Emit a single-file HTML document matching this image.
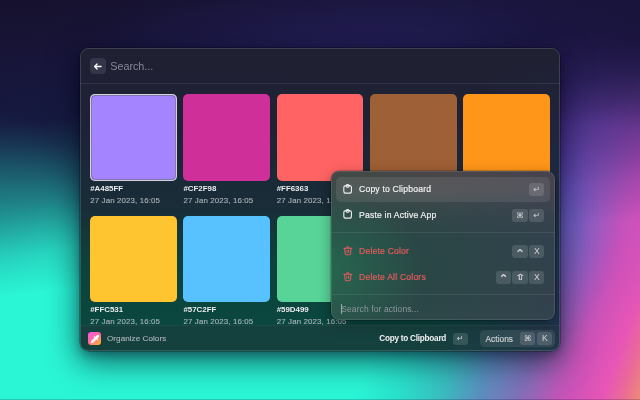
<!DOCTYPE html>
<html lang="en">
<head>
<meta charset="utf-8">
<title>Organize Colors</title>
<style>
*{box-sizing:border-box;margin:0;padding:0}
html,body{width:640px;height:400px;overflow:hidden;background:#15132f}
body{position:relative;font-family:"Liberation Sans",sans-serif}
.bg{position:absolute;left:0;top:0;width:640px;height:400px;overflow:hidden;
 background:
  radial-gradient(ellipse 85px 85px at -10px 195px, rgba(30,150,150,.30), rgba(30,150,150,0) 100%),
  radial-gradient(ellipse 200px 90px at 640px 40px, rgba(28,16,60,.6), rgba(28,16,60,0) 100%),
  radial-gradient(ellipse 170px 95px at 615px 125px, rgba(120,55,185,.40), rgba(120,55,185,0) 100%),
  radial-gradient(ellipse 300px 90px at 370px 62px, rgba(38,31,92,.85), rgba(38,31,92,0) 100%),
  linear-gradient(173deg,#16112d 0px,#17153a 70px,#161a40 125px,rgba(22,26,64,.9) 150px,rgba(22,26,64,.72) 180px,rgba(22,26,64,.54) 205px,rgba(22,26,64,.33) 230px,rgba(22,26,64,.15) 255px,rgba(22,26,64,0) 295px),
  radial-gradient(ellipse 95px 170px at 665px 165px, rgba(204,80,190,.92), rgba(204,80,190,0) 100%),
  radial-gradient(ellipse 85px 240px at 555px 110px, rgba(112,68,210,.95), rgba(112,68,210,0) 100%),
  linear-gradient(110deg,#2af5d5 0px,#2af5d5 470px,#2ae0cc 510px,#38c0c0 548px,#5a90c0 585px,#8070b8 623px,#c055b8 660px,#d052b8 675px,#e856b6 702px,#ea6a98 720px,#ef8a78 738px);}
.bgline{position:absolute;left:0;top:399px;width:640px;height:1px;background:rgba(0,0,40,.18)}
.win{will-change:transform;position:absolute;left:80px;top:48px;width:480px;height:303px;border-radius:8.5px;overflow:hidden;
 background:radial-gradient(ellipse 150px 230px at 100% 78%,rgba(40,44,86,.85),rgba(40,44,86,.32) 45%,rgba(40,44,86,0) 100%),linear-gradient(180deg,#1f2032 0%,#1f2134 17%,#1e2236 27%,#1c2537 35%,#1a2a38 43%,#192d38 53.5%,#14363a 60%,#0f3f3c 68%,#0c443d 76.5%,#0a473e 90%,#0a473e 100%);
 box-shadow:0 0 0 .5px rgba(0,0,0,.5),0 9px 30px 2px rgba(0,0,25,.6),0 4px 10px rgba(0,0,25,.25)}
.ring{position:absolute;left:80px;top:48px;width:480px;height:303px;border-radius:8.5px;border:1px solid rgba(255,255,255,.14);pointer-events:none}
.top{position:absolute;left:0;top:0;width:100%;height:36px;border-bottom:1px solid rgba(255,255,255,.08)}
.back{position:absolute;left:10px;top:10.25px;width:15.5px;height:15.5px;border-radius:4px;background:#34354b}
.back svg{position:absolute;left:3.25px;top:3.25px}
.ph{position:absolute;left:30.25px;top:10.6px;font-size:10.75px;line-height:15px;color:#868796}
.tile{position:absolute;width:86.75px;height:86.5px;border-radius:5px}
.sel{box-shadow:inset 0 0 0 1.3px #d2d2d8,inset 0 0 0 2px rgba(50,45,90,.55)}
.t{position:absolute;font-size:7.9px;line-height:10px;font-weight:bold;color:#ecedf0;white-space:nowrap;margin-top:.6px;margin-left:-.3px}
.s{position:absolute;font-size:7.9px;line-height:10px;color:#adb2ba;-webkit-text-stroke:.12px;white-space:nowrap;letter-spacing:.13px;margin-left:-.3px}
.foot{position:absolute;left:0;top:277.25px;width:100%;height:25.75px;background:rgba(45,50,60,.30);box-shadow:inset 0 1px 0 rgba(255,255,255,.05)}

.panel{position:absolute;left:251px;top:123px;width:224px;height:149px;border-radius:8px;overflow:hidden;
 background:radial-gradient(ellipse 95px 75px at 0px 100px,rgba(40,125,88,.55),rgba(40,125,88,0) 100%),linear-gradient(90deg,rgba(20,85,62,.18) 0%,rgba(40,60,70,.05) 45%,rgba(64,56,88,.34) 100%),
 linear-gradient(180deg,#4b4748 0%,#464a4b 14%,#36484a 26%,#2b4646 45%,#2a4645 70%,#2e4849 100%);
 box-shadow:0 0 0 .5px rgba(0,0,0,.35),0 4px 14px rgba(0,0,0,.35)}
.panel:after{content:"";position:absolute;inset:0;border-radius:8px;border:1px solid rgba(255,255,255,.10)}
.rowsel{position:absolute;left:5px;top:5.5px;width:213.5px;height:25px;border-radius:5px;background:rgba(255,255,255,.085)}
.pi{position:absolute;left:12px;width:9.6px;height:9.6px}
.pt{position:absolute;left:28px;font-size:8.6px;line-height:12px;color:#efeff1;white-space:nowrap;letter-spacing:.2px;-webkit-text-stroke:.2px}
.red{color:#e85a5c}
.sep{position:absolute;left:0;width:100%;height:1px;background:rgba(255,255,255,.08)}
.k{position:absolute;width:15.3px;height:13px;border-radius:3.2px;background:rgba(255,255,255,.13);color:#d4d6da;font-size:8px;line-height:13px;text-align:center;font-family:"DejaVu Sans","Liberation Sans",sans-serif}
.k.l{font-family:"Liberation Sans",sans-serif;font-size:8.6px}
.gc{position:relative;font-size:12px;top:2.6px;-webkit-text-stroke:.25px}
.gs{position:relative;display:inline-block;font-size:8.2px;top:0px;transform:scale(1.5,1);-webkit-text-stroke:.2px}
.psearch{position:absolute;left:10.25px;top:131.5px;font-size:8.5px;line-height:12px;color:#8b989c;white-space:nowrap;letter-spacing:.1px}
.caret{position:absolute;left:9.75px;top:132.5px;width:1px;height:10px;background:rgba(225,230,232,.6)}
.ficon{position:absolute;left:7.75px;top:6.5px;width:13px;height:13px;border-radius:3.2px;background:linear-gradient(145deg,#fa5ce6 8%,#ff6a9a 48%,#ffb02e 92%)}
.ft{position:absolute;left:27px;top:7.6px;font-size:8.1px;line-height:12px;color:#adb5b9;white-space:nowrap;letter-spacing:.05px;-webkit-text-stroke:.12px}
.fa{position:absolute;left:299.25px;top:7.9px;font-size:8.2px;line-height:12px;font-weight:bold;color:#f1f2f3;white-space:nowrap;letter-spacing:-.24px}
.abtn{position:absolute;left:399.75px;top:4.5px;width:75.25px;height:17.5px;border-radius:4.5px;background:rgba(255,255,255,.09)}
.at{position:absolute;left:405.5px;top:7.6px;font-size:8.3px;line-height:12px;color:#d0d4d8;white-space:nowrap;letter-spacing:.05px;-webkit-text-stroke:.15px}
</style>
</head>
<body>
<div class="bg"></div>
<div class="bgline"></div>
<div class="win">
 <div class="top">
  <div class="back"><svg width="9" height="9" viewBox="0 0 9 9"><path d="M8.100 4.500H1.900M4.100 2L1.600 4.500L4.100 7" fill="none" stroke="#fff" stroke-width="1.3" stroke-linecap="round" stroke-linejoin="round"/></svg></div>
  <div class="ph">Search...</div>
 </div>
 <div class="tile sel" style="left:10.0px;top:46.25px;background:#A485FF"></div>
 <div class="t" style="left:10.5px;top:135.45px">#A485FF</div>
 <div class="s" style="left:10.5px;top:147.95px">27 Jan 2023, 16:05</div>
 <div class="tile" style="left:103.25px;top:46.25px;background:#CF2F98"></div>
 <div class="t" style="left:103.75px;top:135.45px">#CF2F98</div>
 <div class="s" style="left:103.75px;top:147.95px">27 Jan 2023, 16:05</div>
 <div class="tile" style="left:196.5px;top:46.25px;background:#FF6363"></div>
 <div class="t" style="left:197.0px;top:135.45px">#FF6363</div>
 <div class="s" style="left:197.0px;top:147.95px">27 Jan 2023, 16:05</div>
 <div class="tile" style="left:289.75px;top:46.25px;background:#9E6036"></div>
 <div class="t" style="left:290.25px;top:135.45px">#9E6036</div>
 <div class="s" style="left:290.25px;top:147.95px">27 Jan 2023, 16:05</div>
 <div class="tile" style="left:383.0px;top:46.25px;background:#FF9619"></div>
 <div class="t" style="left:383.5px;top:135.45px">#FF9619</div>
 <div class="s" style="left:383.5px;top:147.95px">27 Jan 2023, 16:05</div>
 <div class="tile" style="left:10.0px;top:167.5px;background:#FFC531"></div>
 <div class="t" style="left:10.5px;top:256.7px">#FFC531</div>
 <div class="s" style="left:10.5px;top:269.2px">27 Jan 2023, 16:05</div>
 <div class="tile" style="left:103.25px;top:167.5px;background:#57C2FF"></div>
 <div class="t" style="left:103.75px;top:256.7px">#57C2FF</div>
 <div class="s" style="left:103.75px;top:269.2px">27 Jan 2023, 16:05</div>
 <div class="tile" style="left:196.5px;top:167.5px;background:#59D499"></div>
 <div class="t" style="left:197.0px;top:256.7px">#59D499</div>
 <div class="s" style="left:197.0px;top:269.2px">27 Jan 2023, 16:05</div>

 <div class="panel">
  <div class="rowsel"></div>
  <svg class="pi" style="top:12.7px;width:9.6px;height:10.4px" viewBox="0 0 9.600 10.400"><rect x=".8" y="1.650" width="7.650" height="7.500" rx="2" fill="none" stroke="#ececef" stroke-width="1.1"/><rect x="3.250" y=".6" width="2.750" height="2.700" rx="1.100" fill="none" stroke="#ececef" stroke-width="1.150"/></svg>
  <div class="pt" style="top:12px">Copy to Clipboard</div>
  <div class="k" style="left:198.2px;top:11.5px">&#8629;</div>
  <svg class="pi" style="top:38.3px;width:9.6px;height:10.4px" viewBox="0 0 9.600 10.400"><rect x=".8" y="1.650" width="7.650" height="7.500" rx="2" fill="none" stroke="#ececef" stroke-width="1.1"/><rect x="3.250" y=".6" width="2.750" height="2.700" rx="1.100" fill="none" stroke="#ececef" stroke-width="1.150"/></svg>
  <div class="pt" style="top:37.5px">Paste in Active App</div>
  <div class="k" style="left:181.3px;top:37.5px">&#8984;</div>
  <div class="k" style="left:198.2px;top:37.5px">&#8629;</div>
  <div class="sep" style="top:61px"></div>
  <svg class="pi" style="top:75.3px" viewBox="0 0 10 10"><path d="M.8 2.300h8.400M3.700 2.100c0-.9.500-1.400 1.300-1.400s1.300.5 1.300 1.400M1.700 2.500l.45 5.300c.08.900.6 1.400 1.500 1.400h2.700c.9 0 1.420-.5 1.500-1.400l.45-5.300" fill="none" stroke="#e85a5c" stroke-width="1.05" stroke-linecap="round" stroke-linejoin="round"/><path d="M4.050 4.400v2.300M5.950 4.400v2.300" fill="none" stroke="#e85a5c" stroke-width="1" stroke-linecap="round"/></svg>
  <div class="pt red" style="top:73.75px">Delete Color</div>
  <div class="k" style="left:181.3px;top:74.4px"><span class="gc">&#8963;</span></div>
  <div class="k l" style="left:198.2px;top:74.4px">X</div>
  <svg class="pi" style="top:101.3px" viewBox="0 0 10 10"><path d="M.8 2.300h8.400M3.700 2.100c0-.9.500-1.400 1.300-1.400s1.300.5 1.300 1.400M1.700 2.500l.45 5.300c.08.900.6 1.400 1.500 1.400h2.700c.9 0 1.420-.5 1.500-1.400l.45-5.300" fill="none" stroke="#e85a5c" stroke-width="1.05" stroke-linecap="round" stroke-linejoin="round"/><path d="M4.050 4.400v2.300M5.950 4.400v2.300" fill="none" stroke="#e85a5c" stroke-width="1" stroke-linecap="round"/></svg>
  <div class="pt red" style="top:99.75px">Delete All Colors</div>
  <div class="k" style="left:164.8px;top:99.9px"><span class="gc">&#8963;</span></div>
  <div class="k" style="left:181.3px;top:99.9px"><span class="gs">&#8679;</span></div>
  <div class="k l" style="left:198.2px;top:99.9px">X</div>
  <div class="sep" style="top:123px"></div>
  <div class="caret"></div>
  <div class="psearch">Search for actions...</div>
 </div>
 <div class="foot">
  <div class="ficon"><svg width="13" height="13" viewBox="0 0 13 13"><g transform="rotate(45 6.5 6.5) translate(6.5 6.5) scale(1.12) translate(-6.5 -6.5)" fill="#fff"><rect x="5.300" y="1.200" width="2.400" height="3.300" rx="1.200"/><rect x="4.200" y="4.100" width="4.600" height="1.200" rx=".5"/><path d="M5.500 5.250h2v3.600l-1 2.100-1-2.100z" fill="#fff" fill-opacity=".88" stroke="#fff" stroke-width=".5" stroke-linejoin="round"/></g></svg></div>
  <div class="ft">Organize Colors</div>
  <div class="fa">Copy to Clipboard</div>
  <div class="k" style="left:372.75px;top:7.5px;height:12px;line-height:12px">&#8629;</div>
  <div class="abtn"></div>
  <div class="at">Actions</div>
  <div class="k" style="left:440px;top:6.75px;width:15.25px;height:13px;line-height:13px">&#8984;</div>
  <div class="k l" style="left:457.25px;top:6.75px;width:15px;height:13px;line-height:13px">K</div>
 </div>
</div>
<div class="ring"></div>
</body>
</html>
